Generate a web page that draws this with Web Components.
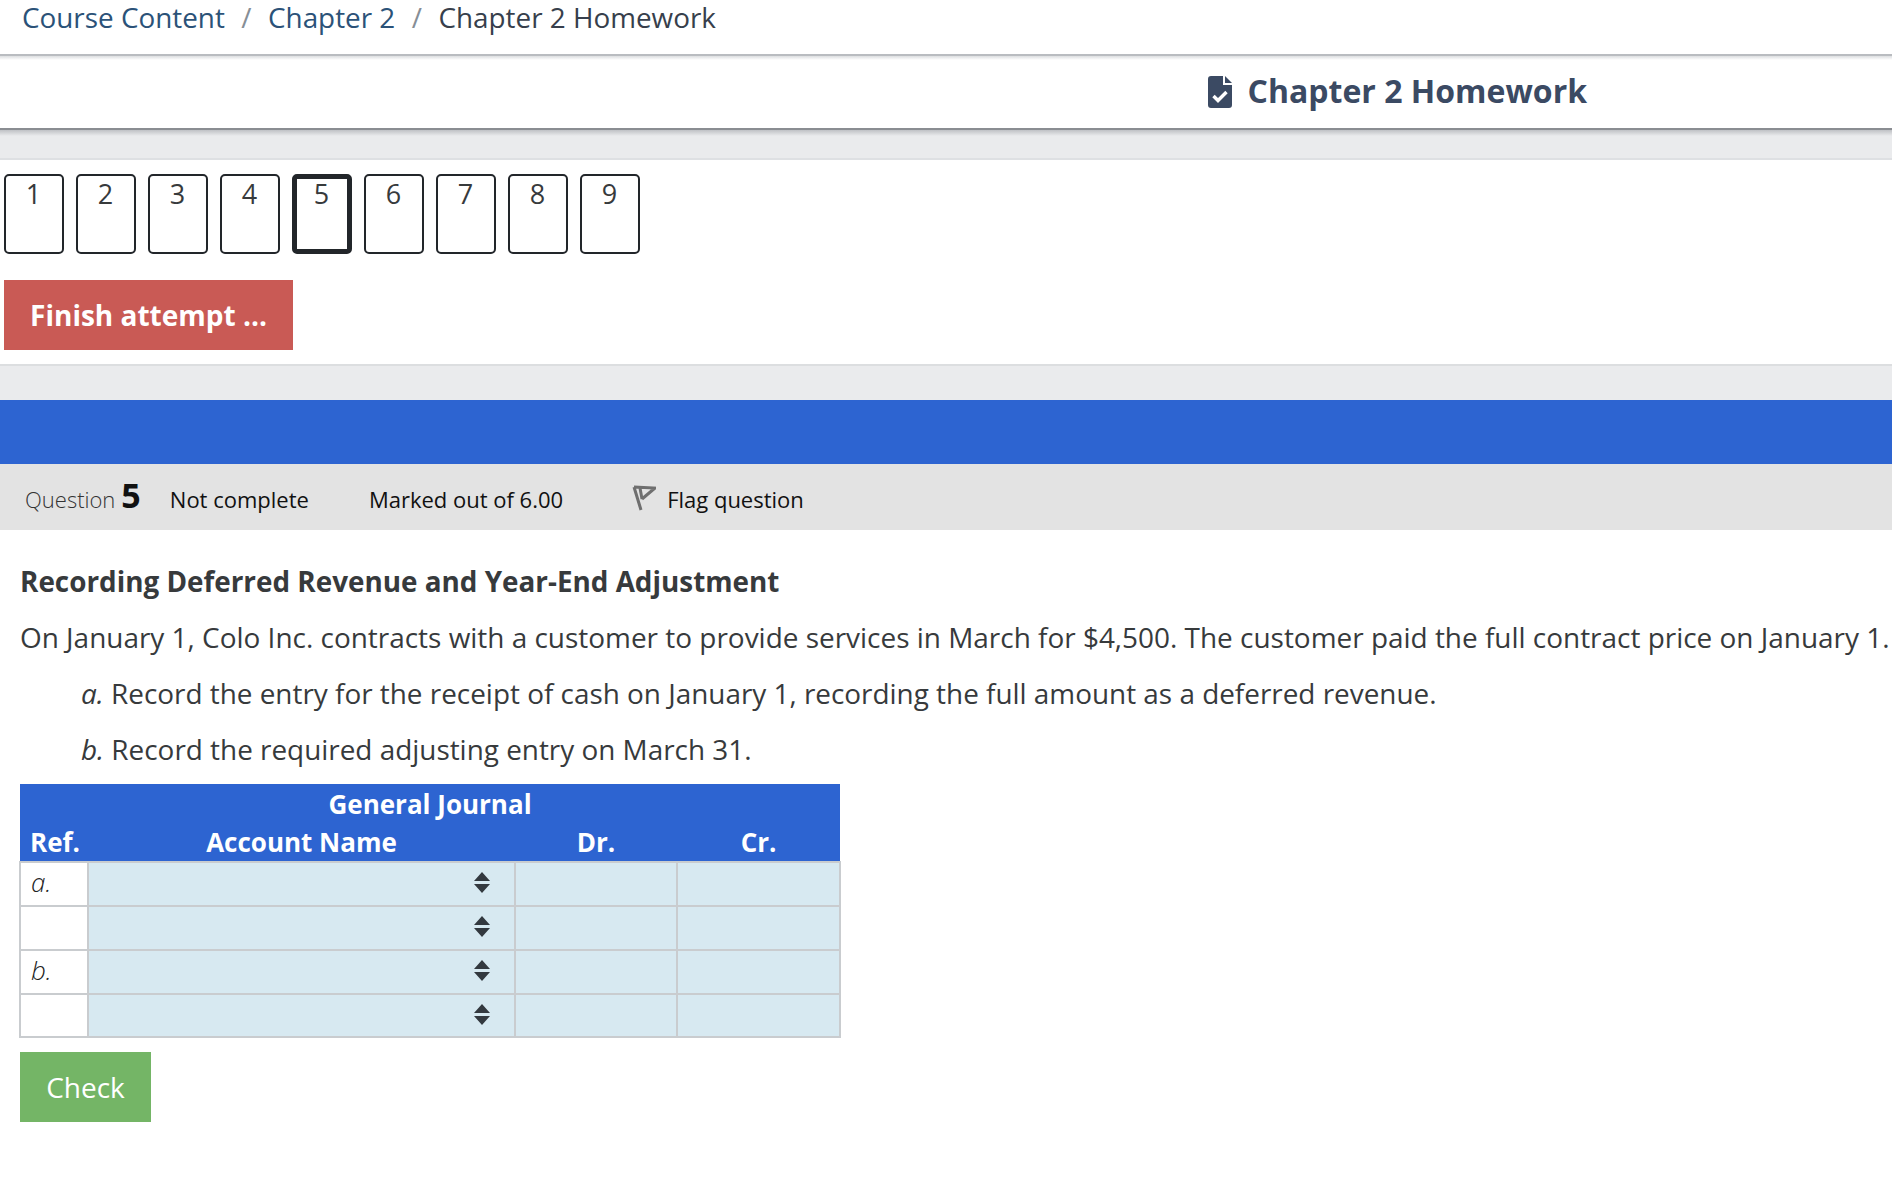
<!DOCTYPE html>
<html lang="en"><head><meta charset="utf-8"><title>Chapter 2 Homework</title>
<style>
html,body{margin:0;padding:0;background:#fff;overflow:hidden;width:1892px;height:1202px}
body{font-family:"Open Sans",sans-serif;font-size:27px;color:#373a3c}
</style></head><body>
<app-breadcrumb></app-breadcrumb>
<app-title>Chapter 2 Homework</app-title>
<app-band h="30"></app-band>
<quiz-nav></quiz-nav>
<app-band h="34" plain></app-band>
<app-band h="64" color="#2d64d1" plain></app-band>
<question-info></question-info>
<question-body></question-body>
<script>
function def(name, html, init){
  customElements.define(name, class extends HTMLElement{
    constructor(){super();this.attachShadow({mode:'open'}).innerHTML=html;}
    connectedCallback(){ if(init) init(this); }
  });
}
def('app-breadcrumb',`<style>
:host{display:flex;box-sizing:border-box;height:56px;padding:0 0 0 22px;align-items:flex-start;background:#fff;border-bottom:2px solid #b9bcc0;position:relative;z-index:2;font-size:27.85px;line-height:34px;color:#373f4c}
:host::after{content:"";position:absolute;left:0;right:0;top:56px;height:4px;background:linear-gradient(#dcdee0,#fff)}
a{color:#2b5278;text-decoration:none}
i{font-style:normal;color:#868e96;margin:0 16.5px}
</style><a>Course Content</a><i>/</i><a>Chapter 2</a><i>/</i><span>Chapter 2 Homework</span>`);
def('app-title',`<style>
:host{display:flex;box-sizing:border-box;height:74px;padding:0 305px 3px 0;justify-content:flex-end;align-items:center;background:#fff;border-bottom:2px solid #8a8d92;position:relative;z-index:1;font-size:32px;font-weight:700;color:#3b4a63}
:host::after{content:"";position:absolute;left:0;right:0;top:74px;height:6px;background:linear-gradient(#bfc1c5,#eaebed)}
svg{width:24px;height:32px;margin-right:16px;margin-top:2px}
</style><svg viewBox="0 0 24 32"><path fill="#3b4a63" d="M3 0H15V9H24V29a3 3 0 0 1-3 3H3a3 3 0 0 1-3-3V3a3 3 0 0 1 3-3Z"/><path fill="#3b4a63" d="M17 0 24 7H17Z"/><path fill="none" stroke="#fff" stroke-width="3.4" d="M5.5 20 10 24.5 18.5 16"/></svg><slot></slot>`);
def('app-band',`<style>:host{display:block;background:#eaebed;box-sizing:border-box}</style>`,el=>{
  el.style.height=el.getAttribute('h')+'px';
  if(el.hasAttribute('color'))el.style.background=el.getAttribute('color');
  if(!el.hasAttribute('plain'))el.style.borderBottom='2px solid #dee0e3';
});
def('nav-box',`<style>
:host{display:block;box-sizing:border-box;width:60px;height:80px;border:2px solid #22262a;border-radius:5px;background:#fff;text-align:center;font-size:27px;line-height:36px;color:#373a3c;padding-right:1px}
:host([current]){border-width:5px;line-height:30px}
</style><slot></slot>`);
def('quiz-nav',`<style>
:host{display:flex;flex-direction:column;box-sizing:border-box;height:206px;padding:14px 0 0 4px;background:#fff;gap:26px;border-bottom:2px solid #dcdee0}
.row{display:flex;gap:12px}
button{all:unset;box-sizing:border-box;width:289px;height:70px;background:#c95a55;color:#fff;font:700 28px/70px "Open Sans",sans-serif;text-align:center}
</style><div class="row"><nav-box>1</nav-box><nav-box>2</nav-box><nav-box>3</nav-box><nav-box>4</nav-box><nav-box current>5</nav-box><nav-box>6</nav-box><nav-box>7</nav-box><nav-box>8</nav-box><nav-box>9</nav-box></div><button>Finish attempt ...</button>`);
def('question-info',`<style>
:host{display:flex;box-sizing:border-box;height:66px;padding:4px 0 0 25px;align-items:center;background:#e3e3e3;font-size:22px;color:#111}
.q{font-weight:300;color:#333;display:flex;align-items:center}
b{font-size:34px;line-height:30px;font-weight:700;color:#111;margin-left:6px;margin-top:-8px}
.nc{margin-left:29px}.m{margin-left:60px}
.f{margin-left:69px;display:flex;align-items:center}
svg{width:24px;height:26px;margin-right:11px;margin-top:-2px}
</style><span class="q">Question<b>5</b></span><span class="nc">Not complete</span><span class="m">Marked out of 6.00</span><span class="f"><svg viewBox="0 0 24 26"><path d="M2 2 L9 25 M2 2 L23 3 L10 14 M8 3 L10 14" fill="none" stroke="#6f6f6f" stroke-width="3" style="filter:blur(.5px)"/></svg>Flag question</span>`);
def('arrows-icon',`<style>:host{display:block;width:16px;height:21px}svg{display:block}</style><svg width="16" height="21" viewBox="0 0 16 21"><path fill="#33393f" d="M8 0 16 9H0ZM0 12H16L8 21Z"/></svg>`);
def('journal-table',`<style>
:host{display:block;width:820px}
table{border-collapse:collapse;table-layout:fixed;width:820px;font-size:26px}
th{background:#2d64d1;color:#fff;font-weight:700;padding:0;height:38px;line-height:36px;border:none}
tr.t th{height:39px;line-height:38px}
th.l{text-align:left;padding-left:10px}
td{border:2px solid #c9cccf;padding:0;height:41.5px;background:#d7e9f1}
td.r{background:#fff;font-style:italic;font-weight:300;padding:0 0 3px 10px;color:#222;line-height:36px;box-sizing:content-box;height:38.5px}
tr.tall td{height:42.5px}
tr.tall td.r{height:39.5px}
.s{display:flex;justify-content:flex-end;padding-right:24px;align-items:center;margin-top:-2px}
</style><table><colgroup><col style="width:68px"><col style="width:427px"><col style="width:162px"><col style="width:163px"></colgroup>
<tr class="t"><th colspan="4">General Journal</th></tr>
<tr><th class="l">Ref.</th><th>Account Name</th><th>Dr.</th><th>Cr.</th></tr>
<tr><td class="r">a.</td><td><div class="s"><arrows-icon></arrows-icon></div></td><td></td><td></td></tr>
<tr class="tall"><td class="r"></td><td><div class="s"><arrows-icon></arrows-icon></div></td><td></td><td></td></tr>
<tr><td class="r">b.</td><td><div class="s"><arrows-icon></arrows-icon></div></td><td></td><td></td></tr>
<tr><td class="r"></td><td><div class="s"><arrows-icon></arrows-icon></div></td><td></td><td></td></tr>
</table>`);
def('question-body',`<style>
:host{display:block;padding:32px 0 0 20px;font-size:27.95px;line-height:38px;color:#373a3c;white-space:nowrap}
h3{margin:0 0 18px;font-size:27.85px;font-weight:700;line-height:38px;color:#373a3c}
p{margin:0 0 18px}
p.i{margin-left:61px;font-size:27.9px}
.g{all:unset;display:block;box-sizing:border-box;width:131px;height:70px;margin-top:14px;background:#74b566;color:#fff;font:400 28px/70px "Open Sans",sans-serif;text-align:center}
journal-table{margin:16px 0 0 -1px}
</style><h3>Recording Deferred Revenue and Year-End Adjustment</h3>
<p>On January 1, Colo Inc. contracts with a customer to provide services in March for $4,500. The customer paid the full contract price on January 1.</p>
<p class="i"><em>a.</em> Record the entry for the receipt of cash on January 1, recording the full amount as a deferred revenue.</p>
<p class="i" style="margin-bottom:0"><em>b.</em> Record the required adjusting entry on March 31.</p>
<journal-table></journal-table>
<button class="g">Check</button>`);
</script>
</body></html>
